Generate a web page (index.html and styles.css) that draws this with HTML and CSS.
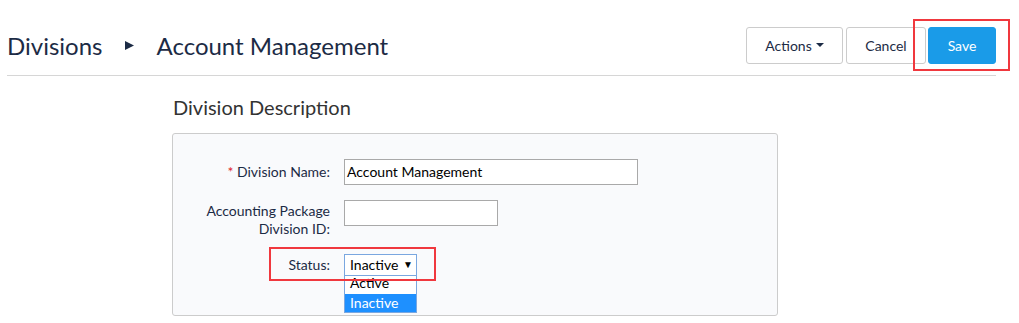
FILE: index.html
```html
<!DOCTYPE html>
<html>
<head>
<meta charset="utf-8">
<link rel="stylesheet" href="styles.css">
</head>
<body>
<div class="page">
  <header class="header">
    <h1 class="crumbs">
      <span class="crumb">Divisions</span>
      <svg class="crumb-sep" width="9" height="9" viewBox="0 0 9 9"><path d="M0 0 L9 4.5 L0 9 Z" fill="#1c2b45"/></svg>
      <span class="crumb">Account Management</span>
    </h1>
    <div class="actions">
      <button class="btn btn-actions">Actions <span class="caret"></span></button>
      <button class="btn btn-cancel">Cancel</button>
      <span class="highlight-wrap">
        <button class="btn btn-primary">Save</button>
        <span class="highlight highlight-save"></span>
      </span>
    </div>
  </header>

  <section class="section">
    <h2 class="section-title">Division Description</h2>
    <div class="panel">
      <div class="row row-name">
        <label class="label"><span class="req">*</span> Division Name:</label>
        <div class="input input-wide">Account Management</div>
      </div>
      <div class="row row-acct">
        <label class="label">Accounting Package<br>Division ID:</label>
        <div class="input input-mid"></div>
      </div>
      <div class="row row-status">
        <label class="label">Status:</label>
        <div class="select-wrap">
          <div class="select">Inactive <span class="select-arrow">&#9660;</span></div>
          <ul class="options">
            <li class="option">Active</li>
            <li class="option option-selected">Inactive</li>
          </ul>
        </div>
        <span class="highlight highlight-status"></span>
      </div>
    </div>
  </section>
</div>
</body>
</html>
```
FILE: styles.css
```css
* { box-sizing: border-box; }
html, body { margin: 0; padding: 0; background: #fff; }
body {
  font-family: Lato, "Open Sans", "Liberation Sans", sans-serif;
  color: #1c2b45;
  width: 1019px;
  height: 323px;
  overflow: hidden;
}
.page { padding: 0 23px 0 7px; }

.header {
  display: flex;
  align-items: center;
  justify-content: space-between;
  height: 76px;
  border-bottom: 1px solid #d6d6d6;
  padding-top: 15px;
}
.crumbs {
  margin: 0;
  display: flex;
  align-items: center;
  font-weight: 400;
  font-size: 24px;
  color: #1c2b45;
}
.crumb-sep { margin: 0 22px 0 23px; position: relative; top: 0; }

.actions { display: flex; gap: 3px; align-items: center; }
.btn {
  font-family: Lato, "Open Sans", "Liberation Sans", sans-serif;
  font-size: 14px;
  height: 37px;
  border: 1px solid #cccccc;
  border-radius: 3px;
  background: #fff;
  color: #1c2b45;
  padding: 0;
  display: inline-flex;
  align-items: center;
  justify-content: center;
}
.btn-actions { width: 97px; }
.btn-cancel { width: 80px; margin-right: -1px; }
.caret {
  display: inline-block;
  width: 0; height: 0;
  border-left: 4px solid transparent;
  border-right: 4px solid transparent;
  border-top: 4px solid #1c2b45;
  margin-left: 4px;
}
.highlight-wrap { position: relative; display: inline-flex; }
.btn-primary {
  background: #1a9be8;
  border-color: #1a9be8;
  color: #fff;
  width: 68px;
}
.highlight {
  position: absolute;
  border: 2px solid #f0383e;
  pointer-events: none;
}
.highlight-save { left: -15px; right: -14px; top: -8px; bottom: -7px; }

.section { margin-left: 165px; padding-top: 19px; }
.section-title {
  margin: 0 0 14px 1px;
  font-weight: 400;
  font-size: 20px;
  color: #333;
  line-height: 24px;
}
.panel {
  width: 606px;
  height: 183px;
  background: #f9fafc;
  border: 1px solid #cccccc;
  border-radius: 3px;
  padding-top: 25px;
}
.row {
  display: flex;
  align-items: center;
  position: relative;
}
.label {
  width: 157px;
  text-align: right;
  font-size: 14px;
  line-height: 18px;
  color: #1c2b45;
  margin-right: 14px;
}
.req { color: #e0292e; }
.input {
  height: 26px;
  border: 1px solid #a9a9a9;
  background: #fff;
  font-size: 14px;
  line-height: 24px;
  padding: 0 2px;
  color: #000;
}
.input-wide { width: 294px; }
.input-mid { width: 154px; }
.row-acct { margin-top: 15px; align-items: flex-start; }
.row-acct .label { margin-top: 2px; }
.row-status { margin-top: 16px; align-items: flex-start; }
.row-status .label { margin-top: 2px; }
.select-wrap { position: relative; width: 73px; }
.select {
  height: 22px;
  border: 1px solid #7aa7e0;
  background: #fff;
  font-size: 14px;
  line-height: 20px;
  padding: 0 0 0 5px;
  color: #000;
  white-space: nowrap;
}
.select-arrow { font-size: 10px; position: relative; top: -2px; margin-left: 1px; }
.options {
  list-style: none;
  margin: 0;
  padding: 0;
  border: 1px solid #7aa7e0;
  border-top: none;
  background: #fff;
  font-size: 14px;
}
.option { height: 18px; line-height: 14px; padding-left: 5px; color: #000; }
.option-selected { background: #1e90ff; color: #fff; line-height: 18px; }
.highlight-status { left: 96px; top: -7px; width: 167px; height: 34px; }
```
